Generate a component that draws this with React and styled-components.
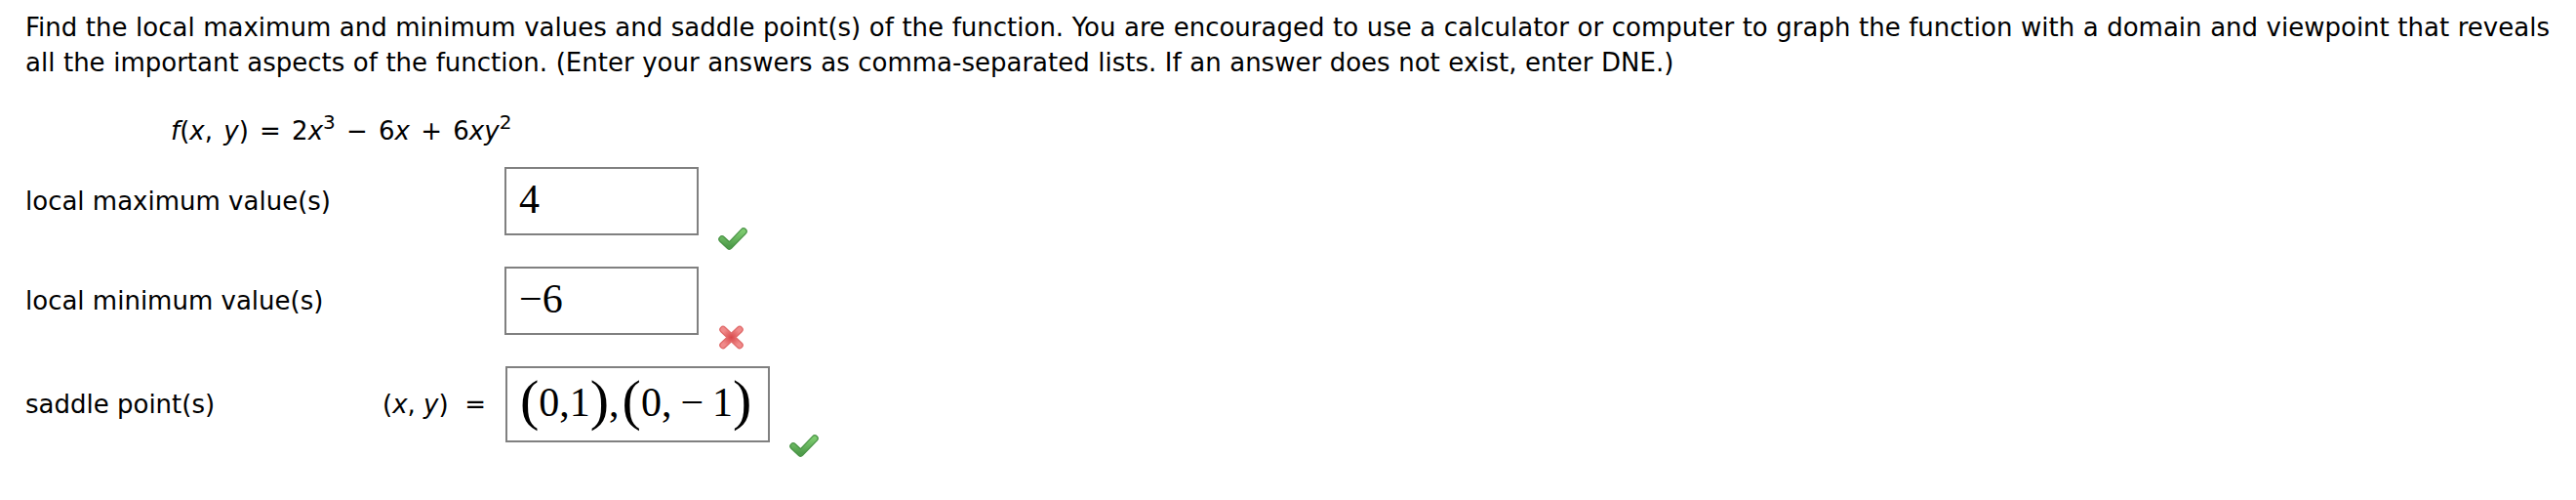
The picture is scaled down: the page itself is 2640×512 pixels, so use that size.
import React from "react";
import styled, { createGlobalStyle } from "styled-components";

const GlobalStyle = createGlobalStyle`
  html, body {
    margin: 0;
    padding: 0;
    background: #ffffff;
  }
  body {
    font-family: "DejaVu Sans", Verdana, sans-serif;
    color: #000000;
  }
`;

const Page = styled.div`
  box-sizing: border-box;
  min-height: 512px;
  padding: 10px 0 30px 26px;
  width: 2640px;
  font-size: 26px;
  line-height: 36px;
`;

const Prompt = styled.p`
  margin: 0;
  word-spacing: 0.3px;
`;

const Formula = styled.p`
  margin: 34px 0 0 149px;
  white-space: nowrap;
  word-spacing: 3px;
`;

const Var = styled.i`
  font-style: italic;
`;

const Sup = styled.sup`
  font-size: 20px;
  line-height: 0;
  vertical-align: 11px;
`;

const Answers = styled.div`
  display: flex;
  flex-direction: column;
  gap: 32px;
  margin-top: 19px;
`;

const Row = styled.div`
  display: flex;
  align-items: center;
`;

const Label = styled.div`
  flex: 0 0 ${(p) => p.$width}px;
  white-space: nowrap;
`;

const Prefix = styled.div`
  flex: 0 0 125px;
  box-sizing: border-box;
  text-align: right;
  padding-right: 20px;
  white-space: nowrap;
`;

const AnswerBox = styled.div`
  flex: 0 0 auto;
  box-sizing: border-box;
  width: ${(p) => p.$width}px;
  height: ${(p) => p.$height}px;
  border: 2px solid #808080;
  display: flex;
  align-items: center;
  padding: 0 0 4px 13px;
  font-family: "Liberation Serif", "Times New Roman", serif;
  font-size: 42px;
  line-height: 1;
  white-space: nowrap;
`;

const Paren = styled.span`
  display: inline-block;
  font-size: 58px;
  line-height: 1;
  margin-top: -5px;
`;

const MathSpace = styled.span`
  display: inline-block;
  width: ${(p) => p.$w}px;
`;

const Mark = styled.svg`
  flex: 0 0 auto;
  width: ${(p) => p.$w}px;
  height: ${(p) => p.$h}px;
  align-self: flex-end;
  margin: 0 0 -15px 20px;
  display: block;
`;

const CheckMark = () => (
  <Mark $w={30} $h={24} viewBox="0 0 30 24">
    <defs>
      <linearGradient id="chk" x1="0" y1="0" x2="0" y2="1">
        <stop offset="0" stopColor="#7dcb6f" />
        <stop offset="1" stopColor="#4f9c4b" />
      </linearGradient>
    </defs>
    <path
      d="M4 13 L11.5 20 L26 5"
      fill="none"
      stroke="#4a9446"
      strokeWidth="7.5"
      strokeLinecap="round"
      strokeLinejoin="round"
    />
    <path
      d="M4 13 L11.5 20 L26 5"
      fill="none"
      stroke="url(#chk)"
      strokeWidth="5"
      strokeLinecap="round"
      strokeLinejoin="round"
    />
  </Mark>
);

const CrossMark = () => (
  <Mark $w={27} $h={25} viewBox="0 0 27 25">
    <defs>
      <radialGradient id="crs" cx="0.5" cy="0.5" r="0.6">
        <stop offset="0" stopColor="#d9484a" />
        <stop offset="1" stopColor="#f08a8a" />
      </radialGradient>
    </defs>
    <path
      d="M5 4.5 L22 20.5 M22 4.5 L5 20.5"
      fill="none"
      stroke="#e06a6a"
      strokeWidth="7.5"
      strokeLinecap="round"
    />
    <path
      d="M5 4.5 L22 20.5 M22 4.5 L5 20.5"
      fill="none"
      stroke="url(#crs)"
      strokeWidth="5"
      strokeLinecap="round"
    />
  </Mark>
);

export default function App() {
  return (
    <>
      <GlobalStyle />
      <Page>
        <Prompt>
          Find the local maximum and minimum values and saddle point(s) of the
          function. You are encouraged to use a calculator or computer to graph
          the function with a domain and viewpoint that reveals all the
          important aspects of the function. (Enter your answers as
          comma-separated lists. If an answer does not exist, enter DNE.)
        </Prompt>
        <Formula>
          <Var>f</Var>(<Var>x</Var>, <Var>y</Var>) = 2<Var>x</Var>
          <Sup>3</Sup> − 6<Var>x</Var> + 6<Var>xy</Var>
          <Sup>2</Sup>
        </Formula>
        <Answers>
          <Row>
            <Label $width={491}>local maximum value(s)</Label>
            <AnswerBox $width={199} $height={70}>4</AnswerBox>
            <CheckMark />
          </Row>
          <Row>
            <Label $width={491}>local minimum value(s)</Label>
            <AnswerBox $width={199} $height={70}>−6</AnswerBox>
            <CrossMark />
          </Row>
          <Row>
            <Label $width={366}>saddle point(s)</Label>
            <Prefix>
              (<Var>x</Var>, <Var>y</Var>)&nbsp;&nbsp;=
            </Prefix>
            <AnswerBox $width={271} $height={78}>
              <Paren>(</Paren>0,1<Paren>)</Paren>,<MathSpace $w={3} />
              <Paren>(</Paren>0,
              <MathSpace $w={9} />−<MathSpace $w={9} />1<Paren>)</Paren>
            </AnswerBox>
            <CheckMark />
          </Row>
        </Answers>
      </Page>
    </>
  );
}
